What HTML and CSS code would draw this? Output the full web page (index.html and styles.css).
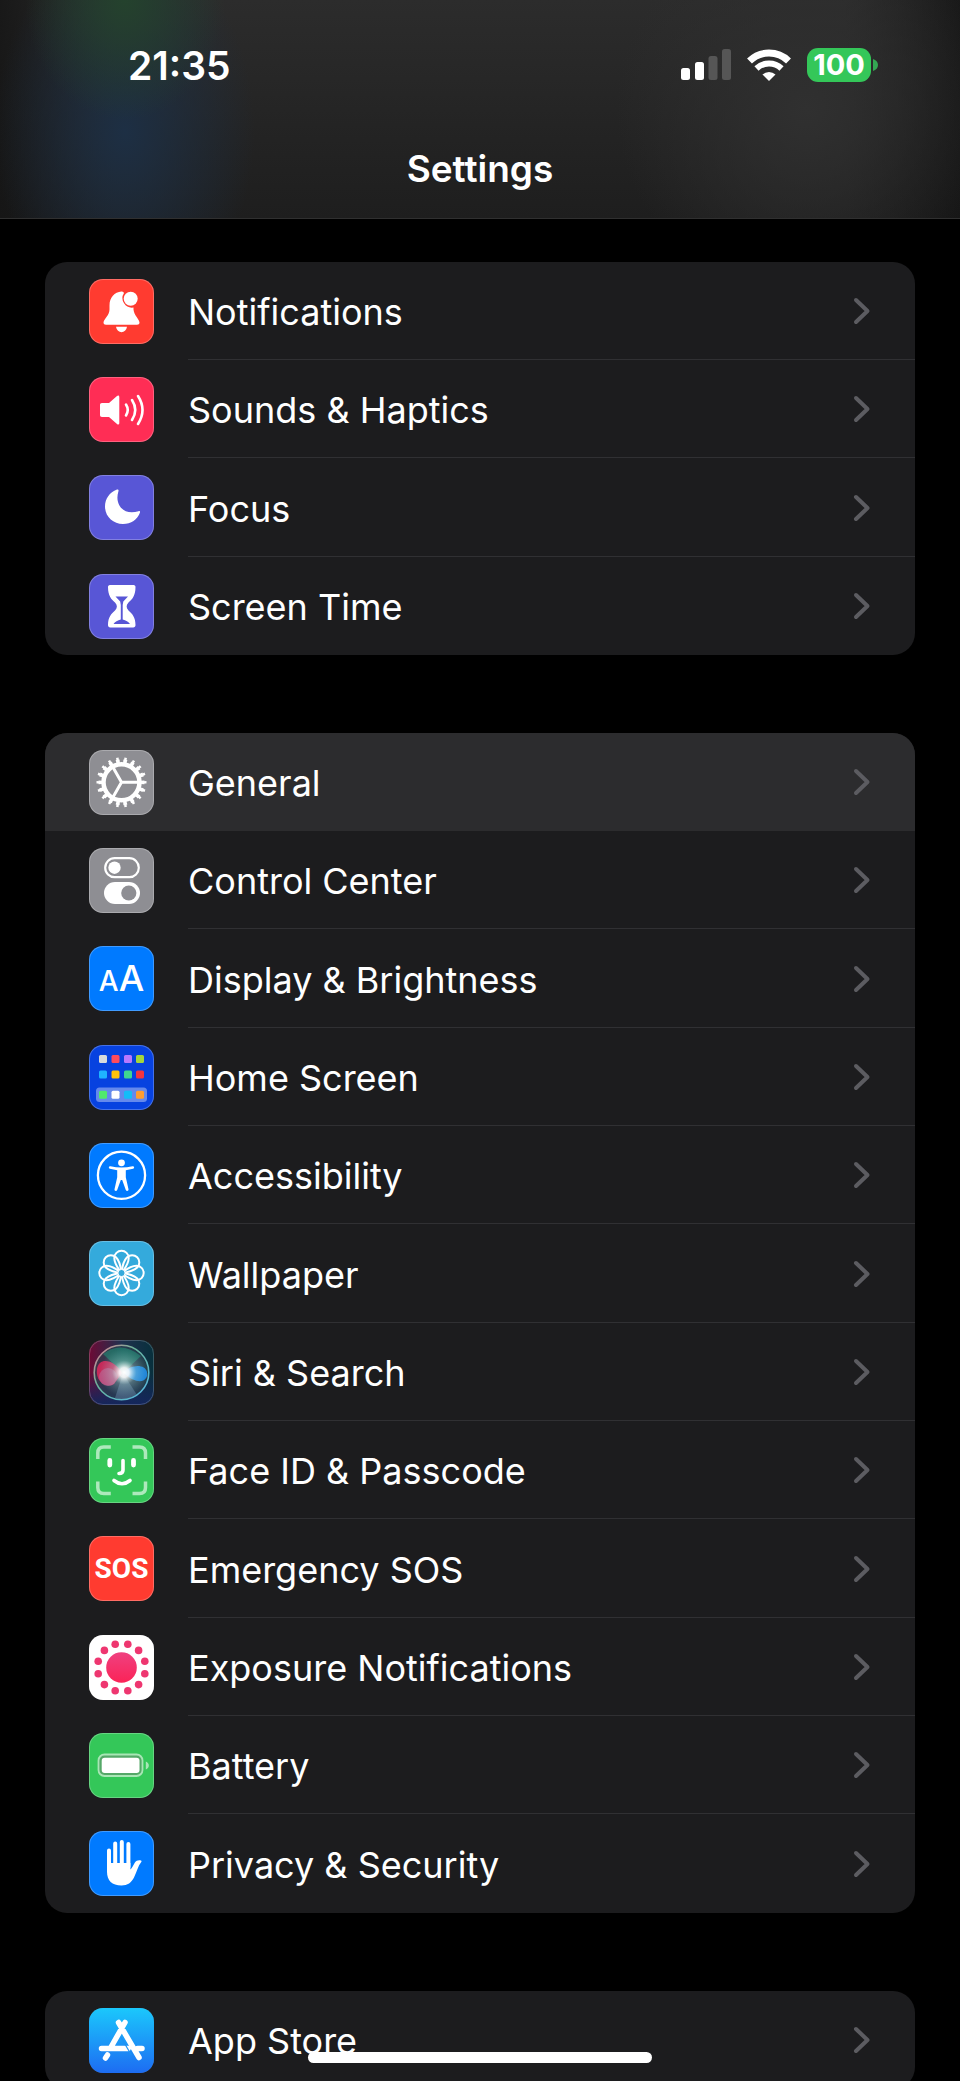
FILE: index.html
```html
<!DOCTYPE html>
<html lang="en">
<head>
<meta charset="utf-8">
<meta name="viewport" content="width=device-width, initial-scale=1">
<title>Settings</title>
<link rel="stylesheet" href="styles.css">
</head>
<body>
<svg class="defs" aria-hidden="true">
  <defs>
    <symbol id="chevron" viewBox="0 0 18 28"><path d="M3 3l11.500 11L3 25" fill="none" stroke="currentColor" stroke-width="4" stroke-linecap="round" stroke-linejoin="round"/></symbol>
    <path id="petal" d="M32.500 32C28.500 27 25.300 21 25.300 17a7.200 7.200 0 0 1 14.400 0C39.700 21 36.500 27 32.500 32z"/>
    <linearGradient id="store" x1="0" y1="0" x2="0" y2="1"><stop offset="0" stop-color="#1bc8fc"/><stop offset="1" stop-color="#1d6cf2"/></linearGradient>
    <linearGradient id="exposure" x1="0" y1="0" x2="0" y2="1"><stop offset="0" stop-color="#ef4180"/><stop offset="1" stop-color="#fb2357"/></linearGradient>
    <linearGradient id="siri-bg" x1="0" y1="0" x2="1" y2="0"><stop offset="0" stop-color="#6d0a35"/><stop offset=".5" stop-color="#20304e"/><stop offset="1" stop-color="#07303c"/></linearGradient>
    <linearGradient id="siri-low" x1="0" y1="0" x2="0" y2="1"><stop offset=".5" stop-color="#14265c" stop-opacity="0"/><stop offset="1" stop-color="#14265c"/></linearGradient>
    <linearGradient id="siri-ring" x1="0" y1="0" x2="1" y2="1"><stop offset="0" stop-color="#e47b93"/><stop offset=".4" stop-color="#68b39a"/><stop offset="1" stop-color="#55b8e8"/></linearGradient>
    <radialGradient id="siri-glow" cx=".55" cy=".5" r=".45"><stop offset="0" stop-color="#fff"/><stop offset=".2" stop-color="#fff" stop-opacity=".9"/><stop offset=".5" stop-color="#b9e4e0" stop-opacity=".3"/><stop offset="1" stop-color="#8fd0d0" stop-opacity="0"/></radialGradient>
  </defs>
</svg>
<div class="screen">
  <header class="top">
    <div class="status">
      <time class="clock">21:35</time>
      <div class="indicators">
        <svg class="signal" viewBox="0 0 50 32" role="img" aria-label="Signal, two bars"><g fill="#fff"><rect x="0" y="19" width="9" height="12" rx="2.500"/><rect x="14" y="13" width="9" height="18" rx="2.500"/></g><g fill="#565656"><rect x="27.500" y="7" width="9" height="24" rx="2.500"/><rect x="41" y="0" width="9" height="31" rx="2.500"/></g></svg>
        <svg class="wifi" viewBox="0 0 44 32" role="img" aria-label="Wi-Fi"><g fill="none" stroke="#fff"><path d="M2.500 12a28 28 0 0 1 39 0" stroke-width="7"/><path d="M9.500 19.500a18 18 0 0 1 25 0" stroke-width="6"/></g><path d="M15.500 25.500a9.500 9.500 0 0 1 13 0L22 32z" fill="#fff"/></svg>
        <span class="charge"><span class="charge-level">100</span><svg class="charge-tip" viewBox="0 0 5 12" aria-hidden="true"><path d="M0 0c3 1 5 3 5 6s-2 5-5 6z" fill="#34a853"/></svg></span>
      </div>
    </div>
    <h1 class="title">Settings</h1>
  </header>
  <main class="content">
    <ul class="group">
      <li><a class="row" href="#notifications">
        <svg class="tile red" viewBox="0 0 65 65" aria-hidden="true"><path fill="#fff" d="M32.500 12.500c-7 .5-12 6-12 14v4c0 6-5.500 9-6 13 0 1.500 1 2.200 2.500 2.200h31c1.500 0 2.500-.7 2.500-2.200-.5-4-5.500-7-6-13v-2a9.500 9.500 0 0 1-9.500-14.500c-.5-1-1.500-1.500-2.500-1.500z"/><circle cx="41.700" cy="19.700" r="7" fill="#fff"/><path fill="#fff" d="M27 47.800h11c-.5 3.500-3 5.400-5.500 5.400S27.500 51.300 27 47.800z"/></svg>
        <span class="label">Notifications</span><svg class="chevron" aria-hidden="true"><use href="#chevron"/></svg></a></li>
      <li><a class="row" href="#sounds">
        <svg class="tile pink" viewBox="0 0 65 65" aria-hidden="true"><path fill="#fff" d="M13 26h7l8-7c1.200-1 2.300-.5 2.300 1v26c0 1.500-1.100 2-2.300 1l-8-7h-7c-1.300 0-2-.7-2-2V28c0-1.300.7-2 2-2z"/><g fill="none" stroke="#fff" stroke-width="2.600" stroke-linecap="round"><path d="M37 27.500q3.500 5.500 0 11M43 23q6.500 10 0 20M49 19q9 14 0 28"/></g></svg>
        <span class="label">Sounds &amp; Haptics</span><svg class="chevron" aria-hidden="true"><use href="#chevron"/></svg></a></li>
      <li><a class="row" href="#focus">
        <svg class="tile indigo" viewBox="0 0 65 65" aria-hidden="true"><path fill="#fff" d="M28 14.500C20.500 17 16 24 16 31.500 16 41.500 24 49 34 49c8 0 14.500-4.500 17-11.500.3-1-.4-1.800-1.500-1.300C35 41 25 30 29.500 16c.3-1.100-.5-1.900-1.500-1.500z"/></svg>
        <span class="label">Focus</span><svg class="chevron" aria-hidden="true"><use href="#chevron"/></svg></a></li>
      <li><a class="row" href="#screen-time">
        <svg class="tile indigo" viewBox="0 0 65 65" aria-hidden="true"><path fill="#fff" d="M21 11h23.500c1.500 0 2 1 2 2 0 9-3.500 12.500-7 15.500-2.500 2.500-2.500 5.500 0 8 3.500 3 7 6.500 7 14.500 0 1.500-.8 2.500-2.300 2.500H21.300c-1.500 0-2.300-1-2.300-2.500 0-8 3.500-11.500 7-14.500 2.500-2.500 2.500-5.500 0-8-3.500-3-7-6.500-7-15.500 0-1 .5-2 2-2z"/><path fill="#5856d6" d="M26.500 22.500h12.500L34.300 27.500 33.700 31v14.500c3 1 6 2 7.300 4.500H24.500c1.300-2.500 4.300-3.500 7.300-4.500V31l-.6-3.500z"/></svg>
        <span class="label">Screen Time</span><svg class="chevron" aria-hidden="true"><use href="#chevron"/></svg></a></li>
    </ul>

    <ul class="group">
      <li><a class="row selected" href="#general" aria-current="true">
        <svg class="tile gray" viewBox="0 0 65 65" aria-hidden="true"><g fill="none" stroke="#fff"><circle cx="32.500" cy="32.300" r="18" stroke-width="4.500"/><circle cx="32.500" cy="32.300" r="21" stroke-width="4" pathLength="180" stroke-dasharray="5 5" stroke-dashoffset="2.500"/><circle cx="32.500" cy="32.300" r="23.500" stroke-width="3" pathLength="180" stroke-dasharray="3 7" stroke-dashoffset="1.500"/><path stroke-width="3" d="M32.500 32.300H50M32.500 32.300l-8.700-15.200M32.500 32.300l-8.700 15.200"/></g></svg>
        <span class="label">General</span><svg class="chevron" aria-hidden="true"><use href="#chevron"/></svg></a></li>
      <li><a class="row" href="#control-center">
        <svg class="tile gray" viewBox="0 0 65 65" aria-hidden="true"><rect x="16.200" y="10.200" width="33.600" height="19" rx="9.500" fill="none" stroke="#fff" stroke-width="2.200"/><circle cx="25.500" cy="19.700" r="6.200" fill="#fff"/><rect x="15" y="34" width="36" height="22" rx="11" fill="#fff"/><circle cx="39.800" cy="45" r="7.600" fill="#8e8e93"/></svg>
        <span class="label">Control Center</span><svg class="chevron" aria-hidden="true"><use href="#chevron"/></svg></a></li>
      <li><a class="row" href="#display">
        <span class="tile blue letters" aria-hidden="true"><span class="letter-small">A</span><span class="letter-large">A</span></span>
        <span class="label">Display &amp; Brightness</span><svg class="chevron" aria-hidden="true"><use href="#chevron"/></svg></a></li>
      <li><a class="row" href="#home-screen">
        <svg class="tile royal" viewBox="0 0 65 65" aria-hidden="true"><rect x="7" y="42.500" width="51" height="14.500" rx="3.500" fill="#fff" fill-opacity=".38"/><rect x="10" y="10" width="8" height="8" rx="1.500" fill="#d8dadc"/><rect x="22.500" y="10" width="8" height="8" rx="1.500" fill="#ff4b5c"/><rect x="35" y="10" width="8" height="8" rx="1.500" fill="#b878ff"/><rect x="47" y="10" width="8" height="8" rx="1.500" fill="#a4d63c"/><rect x="10" y="25.500" width="8" height="8" rx="1.500" fill="#1fb4ff"/><rect x="22.500" y="25.500" width="8" height="8" rx="1.500" fill="#ffc20c"/><rect x="35" y="25.500" width="8" height="8" rx="1.500" fill="#3fd690"/><rect x="47" y="25.500" width="8" height="8" rx="1.500" fill="#f2343f"/><rect x="10" y="45.800" width="8" height="8" rx="1.500" fill="#50ea6c"/><rect x="22.500" y="45.800" width="8" height="8" rx="1.500" fill="#fff"/><rect x="35" y="45.800" width="8" height="8" rx="1.500" fill="#14bcf8"/><rect x="47" y="45.800" width="8" height="8" rx="1.500" fill="#ff9d30"/></svg>
        <span class="label">Home Screen</span><svg class="chevron" aria-hidden="true"><use href="#chevron"/></svg></a></li>
      <li><a class="row" href="#accessibility">
        <svg class="tile blue" viewBox="0 0 65 65" aria-hidden="true"><circle cx="32.500" cy="32.300" r="23.600" fill="none" stroke="#fff" stroke-width="2.300"/><circle cx="32.500" cy="19.800" r="3.400" fill="#fff"/><path fill="#fff" d="M21.500 23.200q11 2.600 22 0c2-.2 2.200 2 .6 2.500l-7.300 1.500v7l2.700 12c.3 1.800-2 2.400-2.700.7l-3.600-10h-1.400l-3.600 10c-.7 1.700-3 1.100-2.700-.7l2.700-12v-7l-7.300-1.500c-1.600-.5-1.400-2.700.6-2.500z"/></svg>
        <span class="label">Accessibility</span><svg class="chevron" aria-hidden="true"><use href="#chevron"/></svg></a></li>
      <li><a class="row" href="#wallpaper">
        <svg class="tile cyan" viewBox="0 0 65 65" aria-hidden="true"><g fill="none" stroke="#fff" stroke-width="2"><use href="#petal"/><use href="#petal" transform="rotate(45 32.500 32)"/><use href="#petal" transform="rotate(90 32.500 32)"/><use href="#petal" transform="rotate(135 32.500 32)"/><use href="#petal" transform="rotate(180 32.500 32)"/><use href="#petal" transform="rotate(225 32.500 32)"/><use href="#petal" transform="rotate(270 32.500 32)"/><use href="#petal" transform="rotate(315 32.500 32)"/></g><circle cx="32.500" cy="32" r="3.600" fill="#34aadc" stroke="#fff" stroke-width="1"/></svg>
        <span class="label">Wallpaper</span><svg class="chevron" aria-hidden="true"><use href="#chevron"/></svg></a></li>
      <li><a class="row" href="#siri">
        <svg class="tile siri" viewBox="0 0 65 65" aria-hidden="true"><rect width="65" height="65" fill="url(#siri-bg)"/><rect width="65" height="65" fill="url(#siri-low)"/><circle cx="32.500" cy="32.500" r="27" fill="#2d4450" fill-opacity=".6"/><path d="M14 14q18-14 38 2L34 33z" fill="#208c74" fill-opacity=".6"/><path d="M33 33C26 20 10 16 8 29s10 20 17 15z" fill="#e8285f" fill-opacity=".8"/><circle cx="19" cy="37" r="9" fill="#b86a9a" fill-opacity=".6"/><path d="M34 32c9-8 22-8 24 0s-8 16-24 0z" fill="#1989e8" fill-opacity=".9"/><path d="M34 33L26 58q12 4 22-3z" fill="#8db4d8" fill-opacity=".3"/><circle cx="32.500" cy="32.500" r="27" fill="url(#siri-glow)"/><circle cx="32.500" cy="32.500" r="27.300" fill="none" stroke="url(#siri-ring)" stroke-width="1.600"/><rect x=".5" y=".5" width="64" height="64" rx="13.500" fill="none" stroke="#fff" stroke-opacity=".2"/></svg>
        <span class="label">Siri &amp; Search</span><svg class="chevron" aria-hidden="true"><use href="#chevron"/></svg></a></li>
      <li><a class="row" href="#face-id">
        <svg class="tile green" viewBox="0 0 65 65" aria-hidden="true"><g fill="none" stroke="#fff" stroke-linecap="round"><path stroke-opacity=".6" stroke-width="3.500" stroke-linecap="butt" d="M8.800 21v-6q0-6 6-6h7M43.500 9h7q6 0 6 6v6M56.500 43.500v6q0 6-6 6h-7M21.800 55.500h-7q-6 0-6-6v-6"/><path stroke-width="4.800" d="M20.800 22.500v4.500M44.500 22.500v4.500"/><path stroke-width="3.600" d="M34 22.500v9.500q0 3.500-4 3.500M25 42.500q8 6.500 16 0"/></g></svg>
        <span class="label">Face ID &amp; Passcode</span><svg class="chevron" aria-hidden="true"><use href="#chevron"/></svg></a></li>
      <li><a class="row" href="#sos">
        <span class="tile red sos" aria-hidden="true">SOS</span>
        <span class="label">Emergency SOS</span><svg class="chevron" aria-hidden="true"><use href="#chevron"/></svg></a></li>
      <li><a class="row" href="#exposure">
        <svg class="tile white" viewBox="0 0 65 65" aria-hidden="true"><circle cx="32.500" cy="32.500" r="15.300" fill="url(#exposure)"/><g fill="#ee3670"><circle cx="26.200" cy="9.200" r="3.800"/><circle cx="38.800" cy="9.200" r="3.800"/><circle cx="49.600" cy="15.400" r="3.800"/><circle cx="55.800" cy="26.300" r="3.800"/><circle cx="55.800" cy="38.700" r="3.800"/><circle cx="49.600" cy="49.600" r="3.800"/><circle cx="38.800" cy="55.800" r="3.800"/><circle cx="26.200" cy="55.800" r="3.800"/><circle cx="15.400" cy="49.600" r="3.800"/><circle cx="9.200" cy="38.700" r="3.800"/><circle cx="9.200" cy="26.300" r="3.800"/><circle cx="15.400" cy="15.400" r="3.800"/></g></svg>
        <span class="label">Exposure Notifications</span><svg class="chevron" aria-hidden="true"><use href="#chevron"/></svg></a></li>
      <li><a class="row" href="#battery">
        <svg class="tile green" viewBox="0 0 65 65" aria-hidden="true"><rect x="9.500" y="21.500" width="44" height="21.500" rx="6" fill="#55a868" stroke="#a9e6b6" stroke-width="1.800"/><rect x="12.700" y="24.700" width="37.800" height="15.200" rx="3" fill="#fff"/><path d="M56.800 28.500c4 1.500 4 6.500 0 8z" fill="#a9e6b6"/></svg>
        <span class="label">Battery</span><svg class="chevron" aria-hidden="true"><use href="#chevron"/></svg></a></li>
      <li><a class="row" href="#privacy">
        <svg class="tile blue" viewBox="0 0 65 65" aria-hidden="true"><g fill="none" stroke="#fff" stroke-width="4" stroke-linecap="round"><path d="M20 19.500V40M26.200 12.500V36M32.800 11V36M39.400 13V36"/></g><path fill="#fff" d="M18 32h23.400v6.500c1.500-1 3-4.500 4.500-7 1.300-2 4-2.800 6-2 .8.300.8 1.200.2 1.800-3.100 3.700-4.100 9.200-7.100 15.200-2.500 5-6.500 8-12.500 8-9.500 0-14.500-5-14.500-14z"/></svg>
        <span class="label">Privacy &amp; Security</span><svg class="chevron" aria-hidden="true"><use href="#chevron"/></svg></a></li>
    </ul>

    <ul class="group">
      <li><a class="row" href="#app-store">
        <svg class="tile" viewBox="0 0 65 65" aria-hidden="true"><rect width="65" height="65" fill="url(#store)"/><g fill="none" stroke="#fff" stroke-width="5" stroke-linecap="round"><path stroke-width="5.500" d="M12.500 40.500H39M48.500 40.500H53M36 14.500L21.500 40M18.500 47l-2 3M29.500 14.500L50 49.500"/></g><path d="M31.800 29L42.500 47.300" stroke="#1d92f6" stroke-width="1.200"/></svg>
        <span class="label">App Store</span><svg class="chevron" aria-hidden="true"><use href="#chevron"/></svg></a></li>
    </ul>
  </main>
  <div class="home-indicator"></div>
</div>
</body>
</html>
```
FILE: styles.css
```css
* {
  box-sizing: border-box;
}

body {
  margin: 0;
  background: #000;
  color: #fff;
  font-family: Inter, "Liberation Sans", sans-serif;
}

.defs {
  position: absolute;
  width: 0;
  height: 0;
}

.screen {
  position: relative;
  display: flex;
  flex-direction: column;
  height: 100vh;
}

.top {
  flex: none;
  padding: 40px 82px 25px 128px;
  border-bottom: 1px solid #303030;
  background:
    radial-gradient(ellipse 100px 120px at 13% 0, #24422d, transparent),
    radial-gradient(ellipse 130px 190px at 13% 60%, #1d2f44, transparent),
    radial-gradient(ellipse 190px 190px at 84% 50%, #303030, transparent),
    linear-gradient(90deg, rgb(20 20 20 / 80%), transparent 12%, transparent 88%, rgb(20 20 20 / 80%)),
    linear-gradient(#2c2c2c, #1e1e1e);
}

.status {
  display: flex;
  align-items: center;
  justify-content: space-between;
  height: 50px;
}

.clock {
  font-size: 39px;
  font-weight: 600;
}

.indicators {
  display: flex;
  align-items: center;
  gap: 16px;
}

.signal {
  width: 50px;
  height: 32px;
}

.wifi {
  width: 44px;
  height: 32px;
}

.charge {
  display: flex;
  align-items: center;
  gap: 2px;
}

.charge-level {
  width: 64px;
  border-radius: 11px;
  background: #34c759;
  font-size: 29px;
  font-weight: 700;
  line-height: 34px;
  text-align: center;
}

.charge-tip {
  width: 5px;
  height: 12px;
}

.title {
  margin: 55px 0 0 -46px;
  font-size: 37px;
  font-weight: 600;
  line-height: 48px;
  text-align: center;
}

.content {
  flex: 1;
  min-height: 0;
  padding: 43px 45px 0;
  overflow-y: auto;
  scrollbar-width: none;
}

.group {
  margin: 0 0 78px;
  padding: 0;
  overflow: hidden;
  border-radius: 22px;
  background: #1c1c1e;
  list-style: none;
}

.row {
  display: flex;
  align-items: center;
  gap: 34px;
  height: 98px;
  padding: 0 44px;
  background: linear-gradient(#303033, #303033) 143px 100% / 100% 1px no-repeat;
  color: inherit;
  text-decoration: none;
}

.group li:nth-child(3n) .row {
  height: 99px;
}

.group li:last-child .row {
  background: none;
}

.row.selected {
  background: #2c2c2e;
}

.tile {
  flex: none;
  width: 65px;
  height: 65px;
  overflow: hidden;
  border-radius: 14px;
  box-shadow: inset 0 0 0 1px rgb(255 255 255 / 25%);
}

.red { background: #ff3b30; }
.pink { background: #ff2d55; }
.indigo { background: #5856d6; }
.gray { background: #8e8e93; }
.blue { background: #007aff; }
.royal { background: #0742e0; }
.cyan { background: #34aadc; }
.green { background: #34c759; }
.white { background: #fff; }

.letters {
  display: flex;
  align-items: baseline;
  justify-content: center;
  font-weight: 500;
  line-height: 65px;
}

.letter-small {
  font-size: 28px;
}

.letter-large {
  font-size: 36px;
}

.sos {
  font-family: "Liberation Sans Narrow", Roboto, sans-serif;
  font-size: 28px;
  font-weight: 700;
  line-height: 65px;
  text-align: center;
}

.label {
  flex: 1;
  padding-top: 2px;
  font-size: 36px;
}

.chevron {
  flex: none;
  width: 18px;
  height: 28px;
  color: #5c5c61;
}

.home-indicator {
  position: absolute;
  bottom: 18px;
  left: 50%;
  width: 344px;
  height: 11px;
  border-radius: 6px;
  background: #fff;
  transform: translateX(-50%);
}
```
